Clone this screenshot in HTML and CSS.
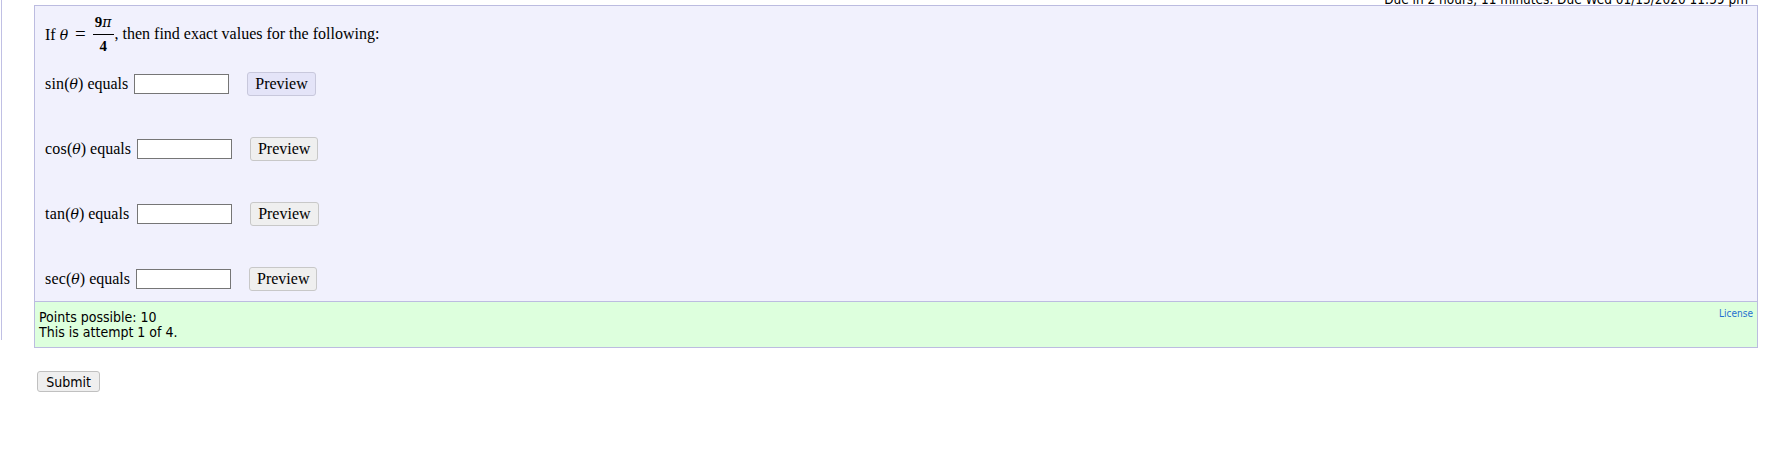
FILE: index.html
```html
<!DOCTYPE html>
<html>
<head>
<meta charset="utf-8">
<link rel="stylesheet" href="styles.css">
</head>
<body>
<div class="layout">
  <div class="rail"></div>
  <div class="main">
    <div class="due">Due in 2 hours, 11 minutes. Due Wed 01/15/2020 11:59 pm</div>
    <div class="qbox">
      <div class="question">
        <div class="intro">
          <span class="m">If <i>θ</i> <span class="eq">=</span></span>
          <span class="frac"><span class="num">9<i>π</i></span><span class="den">4</span></span>
          <span class="rest">, then find exact values for the following:</span>
        </div>
        <div class="row">
          <span class="label"><span class="fn">sin</span>(<i>θ</i>) equals</span>
          <input class="ans" type="text">
          <button class="preview active">Preview</button>
        </div>
        <div class="row">
          <span class="label"><span class="fn">cos</span>(<i>θ</i>) equals</span>
          <input class="ans" type="text">
          <button class="preview">Preview</button>
        </div>
        <div class="row">
          <span class="label"><span class="fn">tan</span>(<i>θ</i>) equals</span>
          <input class="ans wide" type="text">
          <button class="preview">Preview</button>
        </div>
        <div class="row">
          <span class="label"><span class="fn">sec</span>(<i>θ</i>) equals</span>
          <input class="ans" type="text">
          <button class="preview">Preview</button>
        </div>
      </div>
      <div class="footer">
        <div class="info">
          <div>Points possible: 10</div>
          <div>This is attempt 1 of 4.</div>
        </div>
        <a class="license" href="#">License</a>
      </div>
    </div>
    <button class="submit">Submit</button>
  </div>
</div>
</body>
</html>
```

FILE: styles.css
```css
html, body {
  margin: 0;
  padding: 0;
  background: #ffffff;
}

body {
  font-family: "DejaVu Sans", Tahoma, sans-serif;
  font-stretch: condensed;
  font-size: 14px;
  color: #000;
}

.layout {
  display: flex;
  align-items: flex-start;
}

.rail {
  width: 1px;
  margin-left: 1px;
  height: 340px;
  background: #c0c0e4;
  flex: none;
}

.main {
  flex: 1;
  margin-left: 32px;
  margin-right: 10px;
  overflow: hidden;
  padding-top: 9px;
}

.due {
  text-align: right;
  margin-top: -17px;
  height: 13px;
  line-height: 14px;
  padding-right: 10px;
  font-size: 13.5px;
  white-space: nowrap;
}

.qbox {
  border: 1px solid #bcbce0;
}

.question {
  background: #f1f1fd;
  padding: 10px 10px 10px 10px;
  font-family: "Liberation Serif", "Times New Roman", serif;
  font-stretch: normal;
  font-size: 16px;
}

.intro {
  height: 40px;
  margin-top: -2px;
  display: flex;
  align-items: center;
  white-space: pre;
}

.intro i, .label i {
  font-family: "DejaVu Serif", "Liberation Serif", serif;
  font-style: italic;
  font-size: 14px;
}

.eq {
  font-size: 19px;
  margin: 0 3px 0 3px;
}

.frac {
  display: inline-flex;
  flex-direction: column;
  align-items: center;
  margin: 0 1px 0 4px;
  font-size: 15px;
  font-weight: bold;
}

.frac i {
  font-size: 14px;
  font-weight: normal;
}

.num {
  padding: 0 2px 4px;
  border-bottom: 1px solid #000;
  line-height: 15px;
}

.den {
  padding-top: 4px;
  line-height: 15px;
}

.row {
  display: flex;
  align-items: center;
  height: 24px;
  margin-top: 18px;
}

.row + .row {
  margin-top: 41px;
}

.label {
  margin-right: 6px;
  white-space: nowrap;
}

.fn {
  letter-spacing: 0.2px;
}

.ans {
  width: 95px;
  height: 20px;
  box-sizing: border-box;
  border: 1px solid #767676;
  background: #fff;
  padding: 0 2px;
  margin: 0;
}

.ans.wide {
  margin-left: 2px;
}

.preview {
  margin-left: 18px;
  height: 24px;
  padding: 0 7px;
  font-family: "Liberation Serif", "Times New Roman", serif;
  font-size: 16px;
  color: #000;
  background: #efefef;
  border: 1px solid #c8c8c8;
  border-radius: 3px;
}

.preview.active {
  background: #e4e4f8;
  border-color: #c8c8dc;
}

.footer {
  display: flex;
  justify-content: space-between;
  align-items: flex-start;
  background: #ddffdd;
  border-top: 1px solid #bcbce0;
  padding: 8px 4px 7px 4px;
  line-height: 15px;
  font-size: 14px;
}

.license {
  font-size: 10px;
  color: #1f6fd0;
  text-decoration: none;
  line-height: 10px;
  margin-top: -1px;
}

.submit {
  margin: 23px 0 0 3px;
  height: 21px;
  width: 63px;
  padding: 0;
  font-family: "DejaVu Sans", Tahoma, sans-serif;
  font-stretch: condensed;
  font-size: 14px;
  color: #000;
  background: #efefef;
  border: 1px solid #c0c0c0;
  border-radius: 3px;
}
```
